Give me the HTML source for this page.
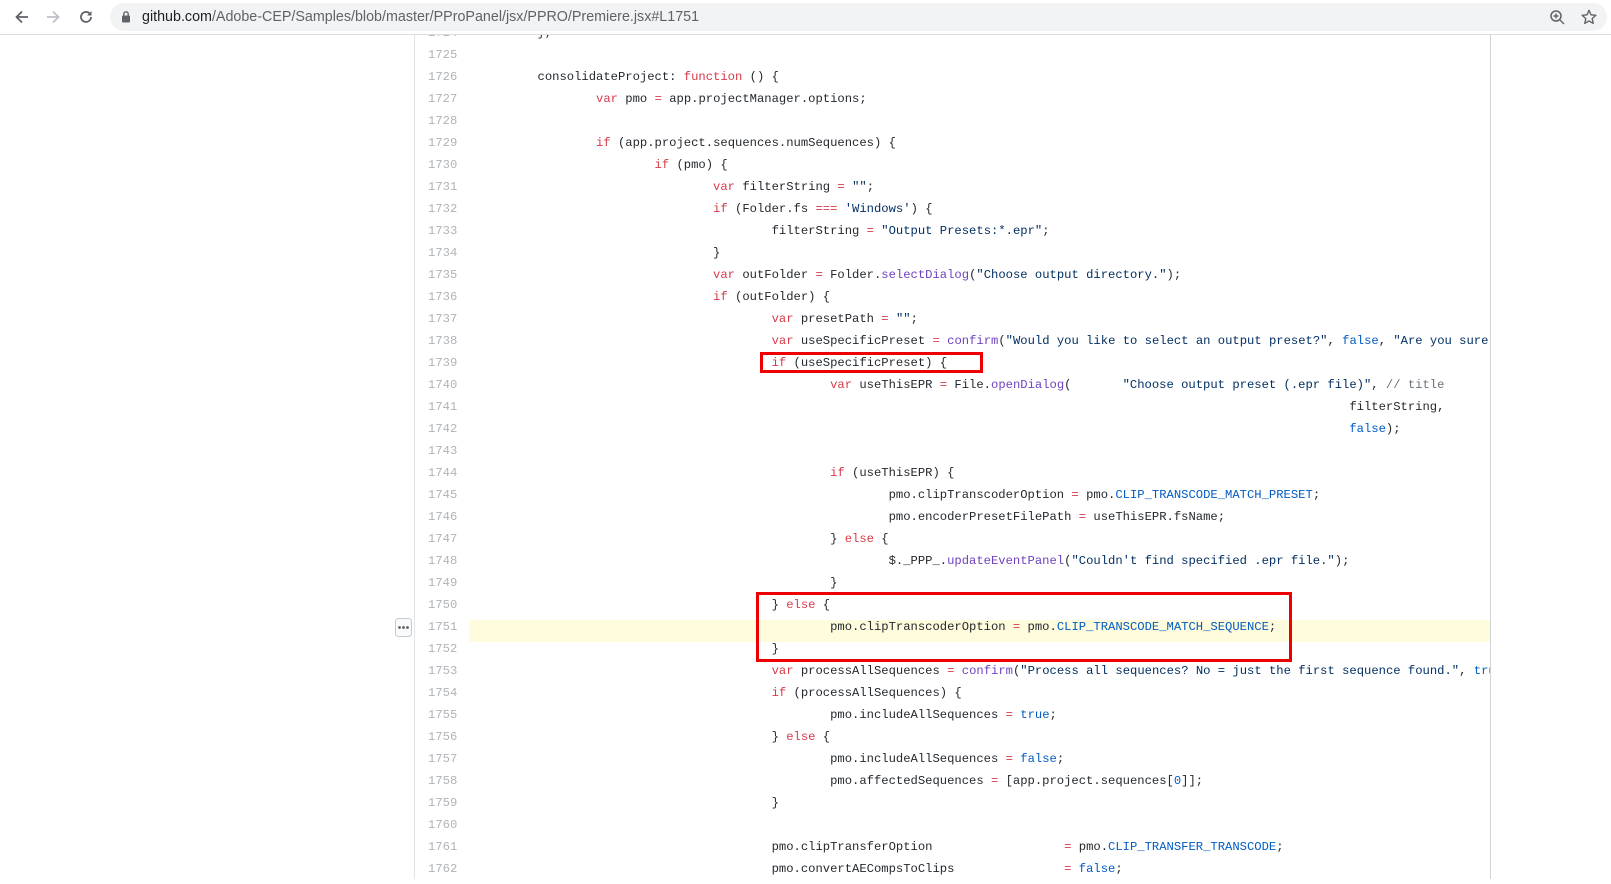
<!DOCTYPE html>
<html><head><meta charset="utf-8">
<style>
*{margin:0;padding:0;box-sizing:border-box}
html,body{width:1611px;height:879px;overflow:hidden;background:#fff}
#bar{position:absolute;left:0;top:0;width:1611px;height:35px;background:#fff;border-bottom:1px solid #dadce0;z-index:5}
#pill{position:absolute;left:110px;top:3px;width:1497px;height:28px;border-radius:14px;background:#f1f3f4}
#url{position:absolute;left:142px;top:6px;font:14.3px "Liberation Sans",sans-serif;color:#202124;line-height:22px;white-space:nowrap}
#url span{color:#5f6368}
#code{position:absolute;left:0;top:26px;width:1611px}
.r{position:relative;height:22px;line-height:22px;font:12.2px "Liberation Mono",monospace;white-space:pre}
.n{position:absolute;left:428px;top:0;color:#b0b4b9}
.c{position:absolute;left:479px;top:0;width:1011px;overflow:hidden;color:#24292e;tab-size:8;-moz-tab-size:8}
.hl{position:absolute;left:469px;top:0;width:1021px;height:22px;background:#fffbdd}
.k{color:#d73a49}.f{color:#6f42c1}.s{color:#032f62}.b{color:#005cc5}.m{color:#6a737d}
#g1{position:absolute;left:414px;top:35px;width:1px;height:844px;background:#e1e4e8}
#g2{position:absolute;left:1490px;top:35px;width:1px;height:844px;background:#d0d3d7}
.box{position:absolute;border:3px solid #ee0000;z-index:3}
#dots{position:absolute;left:395px;top:618px}
</style></head><body>
<div id="bar">
<svg style="position:absolute;left:13px;top:8px" width="18" height="18" viewBox="0 0 18 18"><path d="M15 9H4M9 3.5L3.5 9 9 14.5" stroke="#5f6368" stroke-width="1.8" fill="none"/></svg>
<svg style="position:absolute;left:44px;top:8px" width="18" height="18" viewBox="0 0 18 18"><path d="M3 9h11M9 3.5L14.5 9 9 14.5" stroke="#bdc1c6" stroke-width="1.8" fill="none"/></svg>
<svg style="position:absolute;left:77px;top:8px" width="18" height="18" viewBox="0 0 18 18"><path d="M14 9a5 5 0 1 1-1.5-3.6" stroke="#5f6368" stroke-width="1.8" fill="none"/><path d="M14.5 3v4.5H10z" fill="#5f6368"/></svg>
<div id="pill"></div>
<svg style="position:absolute;left:121px;top:10px" width="10" height="13" viewBox="0 0 10 13"><rect x="1" y="5.5" width="8" height="7" rx="1" fill="#5f6368"/><path d="M2.8 6V4a2.2 2.2 0 0 1 4.4 0v2" stroke="#5f6368" stroke-width="1.4" fill="none"/></svg>
<div id="url">github.com<span>/Adobe-CEP/Samples/blob/master/PProPanel/jsx/PPRO/Premiere.jsx#L1751</span></div>
<svg style="position:absolute;left:1549px;top:9px" width="17" height="17" viewBox="0 0 17 17"><circle cx="7" cy="7" r="5" stroke="#5f6368" stroke-width="1.5" fill="none"/><path d="M10.5 10.5L15 15M7 4.5v5M4.5 7h5" stroke="#5f6368" stroke-width="1.4"/></svg>
<svg style="position:absolute;left:1580px;top:8px" width="18" height="18" viewBox="0 0 24 24"><path d="M12 3l2.6 6.1 6.6.6-5 4.4 1.5 6.5L12 17.2 6.3 20.6l1.5-6.5-5-4.4 6.6-.6z" stroke="#5f6368" stroke-width="1.8" fill="none" stroke-linejoin="round"/></svg>
</div>
<div id="g1"></div><div id="g2"></div>
<div class="box" style="left:760px;top:352px;width:223px;height:21px"></div>
<div class="box" style="left:756px;top:592px;width:536px;height:70px"></div>
<svg id="dots" width="17" height="19" viewBox="0 0 17 19"><rect x="0.5" y="0.5" width="16" height="18" rx="3" fill="#fafbfc" stroke="#c6cbd1"/><circle cx="4.5" cy="9.5" r="1.4" fill="#586069"/><circle cx="8.5" cy="9.5" r="1.4" fill="#586069"/><circle cx="12.5" cy="9.5" r="1.4" fill="#586069"/></svg>
<div id="code">
<div class="r"><span class="n">1724</span><span class="c">	},</span></div>
<div class="r"><span class="n">1725</span><span class="c"></span></div>
<div class="r"><span class="n">1726</span><span class="c">	consolidateProject: <span class="k">function</span> () {</span></div>
<div class="r"><span class="n">1727</span><span class="c">		<span class="k">var</span> pmo <span class="k">=</span> app.projectManager.options;</span></div>
<div class="r"><span class="n">1728</span><span class="c"></span></div>
<div class="r"><span class="n">1729</span><span class="c">		<span class="k">if</span> (app.project.sequences.numSequences) {</span></div>
<div class="r"><span class="n">1730</span><span class="c">			<span class="k">if</span> (pmo) {</span></div>
<div class="r"><span class="n">1731</span><span class="c">				<span class="k">var</span> filterString <span class="k">=</span> <span class="s">""</span>;</span></div>
<div class="r"><span class="n">1732</span><span class="c">				<span class="k">if</span> (Folder.fs <span class="k">===</span> <span class="s">'Windows'</span>) {</span></div>
<div class="r"><span class="n">1733</span><span class="c">					filterString <span class="k">=</span> <span class="s">"Output Presets:*.epr"</span>;</span></div>
<div class="r"><span class="n">1734</span><span class="c">				}</span></div>
<div class="r"><span class="n">1735</span><span class="c">				<span class="k">var</span> outFolder <span class="k">=</span> Folder.<span class="f">selectDialog</span>(<span class="s">"Choose output directory."</span>);</span></div>
<div class="r"><span class="n">1736</span><span class="c">				<span class="k">if</span> (outFolder) {</span></div>
<div class="r"><span class="n">1737</span><span class="c">					<span class="k">var</span> presetPath <span class="k">=</span> <span class="s">""</span>;</span></div>
<div class="r"><span class="n">1738</span><span class="c">					<span class="k">var</span> useSpecificPreset <span class="k">=</span> <span class="f">confirm</span>(<span class="s">"Would you like to select an output preset?"</span>, <span class="b">false</span>, <span class="s">"Are you sure. really?"</span>);</span></div>
<div class="r"><span class="n">1739</span><span class="c">					<span class="k">if</span> (useSpecificPreset) {</span></div>
<div class="r"><span class="n">1740</span><span class="c">						<span class="k">var</span> useThisEPR <span class="k">=</span> File.<span class="f">openDialog</span>(	<span class="s">"Choose output preset (.epr file)"</span>, <span class="m">// title</span></span></div>
<div class="r"><span class="n">1741</span><span class="c">                                                                                                                       filterString,</span></div>
<div class="r"><span class="n">1742</span><span class="c">                                                                                                                       <span class="b">false</span>);</span></div>
<div class="r"><span class="n">1743</span><span class="c"></span></div>
<div class="r"><span class="n">1744</span><span class="c">						<span class="k">if</span> (useThisEPR) {</span></div>
<div class="r"><span class="n">1745</span><span class="c">							pmo.clipTranscoderOption <span class="k">=</span> pmo.<span class="b">CLIP_TRANSCODE_MATCH_PRESET</span>;</span></div>
<div class="r"><span class="n">1746</span><span class="c">							pmo.encoderPresetFilePath <span class="k">=</span> useThisEPR.fsName;</span></div>
<div class="r"><span class="n">1747</span><span class="c">						} <span class="k">else</span> {</span></div>
<div class="r"><span class="n">1748</span><span class="c">							$._PPP_.<span class="f">updateEventPanel</span>(<span class="s">"Couldn't find specified .epr file."</span>);</span></div>
<div class="r"><span class="n">1749</span><span class="c">						}</span></div>
<div class="r"><span class="n">1750</span><span class="c">					} <span class="k">else</span> {</span></div>
<div class="r"><span class="hl"></span><span class="n">1751</span><span class="c">						pmo.clipTranscoderOption <span class="k">=</span> pmo.<span class="b">CLIP_TRANSCODE_MATCH_SEQUENCE</span>;</span></div>
<div class="r"><span class="n">1752</span><span class="c">					}</span></div>
<div class="r"><span class="n">1753</span><span class="c">					<span class="k">var</span> processAllSequences <span class="k">=</span> <span class="f">confirm</span>(<span class="s">"Process all sequences? No = just the first sequence found."</span>, <span class="b">true</span>);</span></div>
<div class="r"><span class="n">1754</span><span class="c">					<span class="k">if</span> (processAllSequences) {</span></div>
<div class="r"><span class="n">1755</span><span class="c">						pmo.includeAllSequences <span class="k">=</span> <span class="b">true</span>;</span></div>
<div class="r"><span class="n">1756</span><span class="c">					} <span class="k">else</span> {</span></div>
<div class="r"><span class="n">1757</span><span class="c">						pmo.includeAllSequences <span class="k">=</span> <span class="b">false</span>;</span></div>
<div class="r"><span class="n">1758</span><span class="c">						pmo.affectedSequences <span class="k">=</span> [app.project.sequences[<span class="b">0</span>]];</span></div>
<div class="r"><span class="n">1759</span><span class="c">					}</span></div>
<div class="r"><span class="n">1760</span><span class="c"></span></div>
<div class="r"><span class="n">1761</span><span class="c">					pmo.clipTransferOption			<span class="k">=</span> pmo.<span class="b">CLIP_TRANSFER_TRANSCODE</span>;</span></div>
<div class="r"><span class="n">1762</span><span class="c">					pmo.convertAECompsToClips		<span class="k">=</span> <span class="b">false</span>;</span></div>
</div>
</body></html>
